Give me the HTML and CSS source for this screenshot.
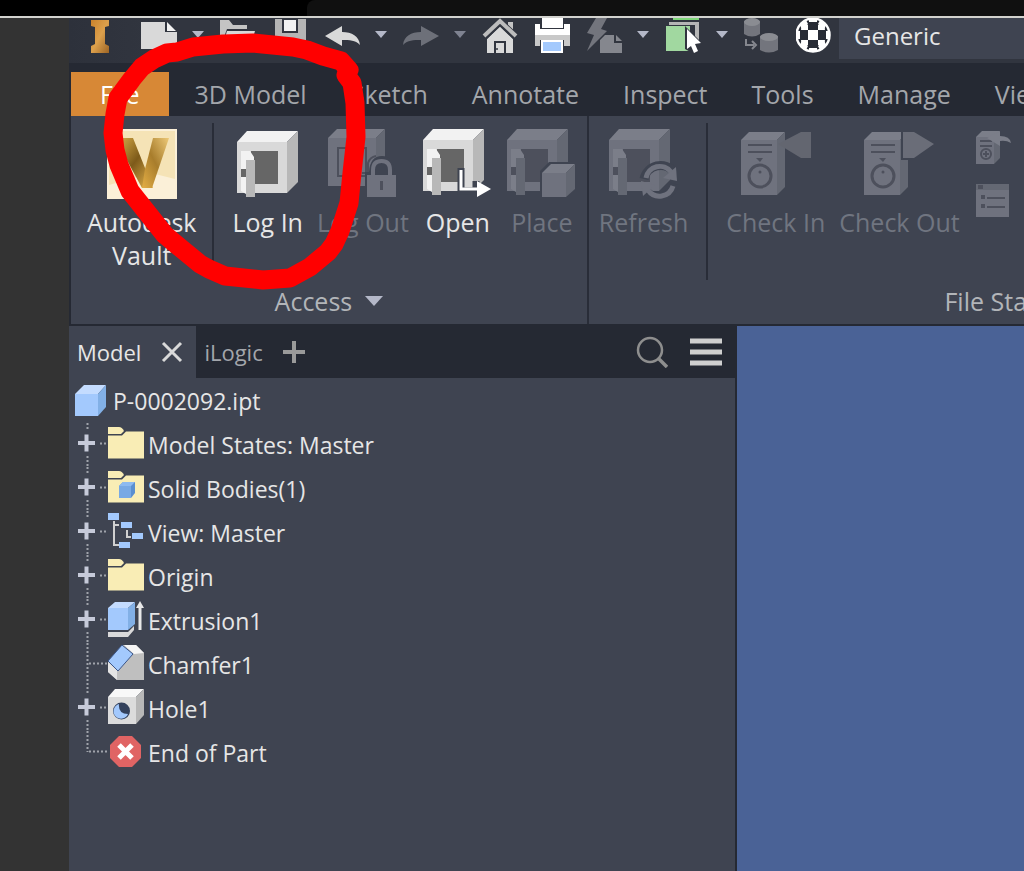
FILE: index.html
```html
<!doctype html>
<html lang="en">
  <head>
    <meta charset="utf-8">
    <title>P-0002092.ipt</title>
    <link rel="stylesheet" href="styles.css">
  </head>
  <body>
    <svg class="defs" aria-hidden="true">
      <defs>
        <linearGradient id="gold" x1="0" y1="0" x2="1" y2="1">
          <stop offset="0" stop-color="#e0b34c" />
          <stop offset="0.5" stop-color="#7d5a1a" />
          <stop offset="1" stop-color="#e8b64e" />
        </linearGradient>
        <linearGradient id="gold-light" x1="1" y1="0" x2="0" y2="1">
          <stop offset="0" stop-color="#edc978" />
          <stop offset="0.5" stop-color="#a87d2c" />
          <stop offset="1" stop-color="#e4ae45" />
        </linearGradient>
        <linearGradient id="bronze" x1="0" y1="0" x2="1" y2="1">
          <stop offset="0" stop-color="#c9822c" />
          <stop offset="0.5" stop-color="#dca04c" />
          <stop offset="1" stop-color="#9c6425" />
        </linearGradient>
      </defs>
      <symbol id="caret" viewBox="0 0 12 36">
        <polygon points="0,13 12,13 6,20" fill="#b4b8c8" />
      </symbol>
      <symbol id="safe" viewBox="0 0 70 70">
        <polygon class="top" points="0,11 10,0 61,0 50,11" />
        <polygon class="side" points="50,11 61,0 61,51 50,62" />
        <rect class="front" x="0" y="11" width="50" height="51" />
        <rect class="inside" x="14" y="20" width="27" height="33" />
        <polygon class="top" points="4,20 13,20 17,26 17,30 9,30 9,63 4,60" />
        <rect class="side" x="9" y="29" width="9" height="37" />
        <rect class="inside" x="4" y="38" width="5" height="8" />
      </symbol>
      <symbol id="vault-file" viewBox="0 0 70 70">
        <polygon class="top" points="0,11 8,3 44,3 36,11" />
        <polygon class="side" points="36,11 44,3 44,58 36,66" />
        <rect class="front" x="0" y="11" width="36" height="55" />
        <rect class="inside" x="7" y="15" width="24" height="2" />
        <rect class="inside" x="7" y="22" width="24" height="2" />
        <polygon class="inside" points="15,29 22,29 19,33" />
        <circle cx="19" cy="47" r="11" fill="none" stroke="#4d505c" stroke-width="3" />
        <circle class="inside" cx="19" cy="43" r="1.5" />
      </symbol>
      <symbol id="folder" viewBox="0 0 36 44">
        <path d="M0 4h11q3 0 5 4l-3 3H0z" fill="#f9edb5" />
        <path d="M0 12.500h14l4-4h18v27H0z" fill="#f9edb5" />
      </symbol>
      <symbol id="cube" viewBox="0 0 32 32">
        <polygon points="0,9 9,0 31,0 23,9" fill="#c4dcff" />
        <polygon points="23,9 31,0 31,22 23,31" fill="#82b0e6" />
        <rect y="9" width="23" height="22" fill="#a3c9fd" />
      </symbol>
      <symbol id="branch-plus" viewBox="0 0 39 44">
        <path class="dots" d="M18.500 0v8M18.500 33v11M31 20.500h7" />
        <path d="M9 20h17M17.500 11.500v17" stroke="#c6cad9" stroke-width="4" />
      </symbol>
      <symbol id="branch-mid" viewBox="0 0 39 44">
        <path class="dots" d="M18.500 0v44M20 20.500h18" />
      </symbol>
      <symbol id="branch-end" viewBox="0 0 39 44">
        <path class="dots" d="M18.500 0v21M20 20.500h18" />
      </symbol>
    </svg>

    <div class="bezel"><div class="bezel-tab"></div></div>

    <div class="app">
      <div class="gutter"></div>
      <div class="window">

        <header class="quick-access">
          <svg class="logo" viewBox="0 0 18 36">
            <path d="M0 2h18v6l-4 1v17l4 2v7H0v-7l4-2V9L0 8z" fill="url(#bronze)" />
          </svg>
          <div class="tools">
            <div class="split">
              <button class="tool" aria-label="New">
                <svg viewBox="0 0 36 36">
                  <polygon points="0,4 24,4 24,14 36,14 36,31 0,31" fill="#d9d9d9" />
                  <polygon points="26,4 35,13 26,13" fill="#f2f2f2" />
                </svg>
              </button>
              <button class="drop" aria-label="New options"><svg><use href="#caret" /></svg></button>
            </div>
            <button class="tool" aria-label="Open">
              <svg viewBox="0 0 36 36">
                <path d="M0 2h9l4 5h14v4H7L0 30z" fill="#c4c4c4" />
                <path d="M7 13h28l-6 20H1z" fill="#d9d9d9" />
              </svg>
            </button>
            <button class="tool" aria-label="Save">
              <svg viewBox="0 0 36 36">
                <path d="M3 1h31v33H7l-4-4z" fill="#b5b5b5" />
                <rect x="10" y="1" width="16" height="14" fill="#31353f" />
                <rect x="12" y="2" width="12" height="11" fill="#f2f2f2" />
              </svg>
            </button>
            <div class="split">
              <button class="tool" aria-label="Undo">
                <svg viewBox="0 0 36 36"><path d="M1 18L18 8v6c10 0 17 4 18 13-5-5-10-5-18-5v6z" fill="#d9d9d9" /></svg>
              </button>
              <button class="drop" aria-label="Undo history"><svg><use href="#caret" /></svg></button>
            </div>
            <div class="split">
              <button class="tool" aria-label="Redo">
                <svg viewBox="0 0 36 36"><path d="M36 18L18 8v6C8 14 1 18 0 27c5-5 10-5 18-5v6z" fill="#6d7079" /></svg>
              </button>
              <button class="drop faded" aria-label="Redo history"><svg><use href="#caret" /></svg></button>
            </div>
            <button class="tool" aria-label="Home">
              <svg viewBox="0 0 36 36">
                <rect x="26" y="4" width="5" height="9" fill="#c4c4c4" />
                <path d="M5 21L18 8l13 13v14H5z" fill="#d9d9d9" />
                <path d="M2 19L18 4l16 15" fill="none" stroke="#31353f" stroke-width="7" />
                <path d="M2 18L18 3l16 15" fill="none" stroke="#bcbcbc" stroke-width="4" />
                <path d="M13 35V24h10v11" fill="#d9d9d9" stroke="#31353f" stroke-width="2" />
                <circle cx="15" cy="31" r="1" fill="#31353f" />
              </svg>
            </button>
            <button class="tool" aria-label="Print">
              <svg viewBox="0 0 36 36">
                <path d="M1 6h5v5h24V6h6v12H1z" fill="#fff" />
                <path d="M1 17h35v11h-6v-6H6v6H1z" fill="#c8c8c8" />
                <rect x="8" y="0" width="21" height="10" fill="#fff" />
                <rect x="7" y="22" width="22" height="13" fill="#fff" />
                <rect x="9" y="24" width="18" height="9" fill="#a3c9fd" />
              </svg>
            </button>
            <div class="split">
              <button class="tool" aria-label="Update">
                <svg viewBox="0 0 36 36">
                  <polygon points="10,0 21,0 15,11 21,13 1,33 8,17 1,15" fill="#73757d" />
                  <polygon points="19,17 28,17 28,25 36,25 36,35 14,35 14,22" fill="#85878e" />
                  <polygon points="30,17 36,23 30,23" fill="#85878e" />
                </svg>
              </button>
              <button class="drop" aria-label="Update options"><svg><use href="#caret" /></svg></button>
            </div>
            <div class="split">
              <button class="tool" aria-label="Select">
                <svg viewBox="0 0 36 36">
                  <path d="M8 0h26v2H8z" fill="#7fd67a" />
                  <path d="M4 4h30v18h-4V7H4z" fill="#b5b5b5" />
                  <rect x="1" y="8" width="24" height="25" fill="#a1d8a0" />
                  <polygon points="20,8 37,25 31,26 34,35 29,36 20,31" fill="#31353f" />
                  <polygon points="22,11 36,25 30,26 33,33 29,35 26,28 22,31" fill="#fff" />
                </svg>
              </button>
              <button class="drop" aria-label="Selection filter"><svg><use href="#caret" /></svg></button>
            </div>
            <button class="tool" aria-label="Update from vault">
              <svg viewBox="0 0 36 36">
                <path d="M0 3v13q8 5 16 0V3z" fill="#73757d" />
                <ellipse cx="8" cy="4" rx="8" ry="4" fill="#8a8c92" />
                <path d="M16 18v14q9 5 18 0V18z" fill="#73757d" />
                <ellipse cx="25" cy="19" rx="9" ry="4" fill="#8a8c92" />
                <path d="M2 21v6h8M8 23l4 4-4 4" fill="none" stroke="#85878e" stroke-width="2" />
              </svg>
            </button>
            <button class="tool" aria-label="Appearance">
              <svg viewBox="0 0 36 36">
                <circle cx="17" cy="17" r="16.500" fill="#272b35" stroke="#fff" stroke-width="2.500" />
                <path d="M12 12h10v10H12zM4 7l6-5 2 4-6 6zM30 7l-6-5-2 4 6 6zM4 27l6 5 2-4-6-6zM30 27l-6 5-2-4 6-6z" fill="#fff" />
                <path d="M6 7h6v5H5zM22 7h6l1 5h-7zM5 22h7v5H6zM22 22h7l-1 5h-6zM13 0h8v4h-8zM13 30h8v4h-8zM0 13h4v8H0zM30 13h4v8h-4z" fill="#fff" />
              </svg>
            </button>
          </div>
          <select class="material" aria-label="Material"><option>Generic</option></select>
        </header>

        <nav class="tabs">
          <a class="tab file" href="#file">File</a>
          <a class="tab" href="#model">3D Model</a>
          <a class="tab" href="#sketch">Sketch</a>
          <a class="tab" href="#annotate">Annotate</a>
          <a class="tab" href="#inspect">Inspect</a>
          <a class="tab" href="#tools">Tools</a>
          <a class="tab" href="#manage">Manage</a>
          <a class="tab" href="#view">View</a>
        </nav>

        <div class="ribbon">
          <section class="panel">
            <div class="commands">
              <div class="group vault">
                <button class="command">
                  <svg viewBox="0 0 70 70">
                    <rect width="70" height="70" fill="#fbf0d8" />
                    <polygon points="2,2 68,2 68,50 44,44 2,56" fill="#f5e3b6" />
                    <polygon points="8,9 26,9 46,59 35,59" fill="url(#gold)" />
                    <polygon points="46,9 62,9 45,59 35,59 38,40" fill="url(#gold-light)" />
                  </svg>
                  <span>Autodesk<br>Vault</span>
                </button>
              </div>
              <div class="group access">
                <button class="command">
                  <svg viewBox="-4 -2 70 70"><use href="#safe" width="70" height="70" /></svg>
                  <span>Log In</span>
                </button>
                <button class="command" disabled>
                  <svg viewBox="0 0 70 70">
                    <polygon class="top" points="0,9 9,0 57,0 48,9" />
                    <polygon class="side" points="48,9 57,0 57,48 48,57" />
                    <rect class="front" y="9" width="48" height="48" />
                    <path d="M10 19h28v28H10zM34 44h6V34q2-6 8-7" fill="none" stroke="#4d505c" stroke-width="2" />
                    <path d="M37 70V43h4q1-16 13-16t13 16h3v27z" fill="#3f4451" />
                    <path d="M45 47v-6q0-9 8.500-9t8.500 9v6" fill="none" stroke="#6f727e" stroke-width="4" />
                    <rect class="front" x="39" y="46" width="29" height="22" />
                    <rect class="inside" x="52" y="52" width="3" height="9" />
                  </svg>
                  <span>Log Out</span>
                </button>
                <button class="command">
                  <svg viewBox="0 0 70 70">
                    <use href="#safe" width="70" height="70" />
                    <path d="M38 39v23h18M53 52v14" fill="none" stroke="#3f4451" stroke-width="7" />
                    <path d="M38 41v19h18" fill="none" stroke="#fff" stroke-width="3" />
                    <polygon points="54,52 68,60 54,68" fill="#fff" />
                  </svg>
                  <span>Open</span>
                </button>
                <button class="command" disabled>
                  <svg viewBox="0 0 70 70">
                    <use href="#safe" width="70" height="70" />
                    <path d="M33 70V42l9-9h28v37z" fill="#3f4451" />
                    <polygon class="top" points="35,44 44,35 68,35 59,44" />
                    <polygon class="side" points="59,44 68,35 68,60 59,68" />
                    <rect class="front" x="35" y="44" width="24" height="24" />
                  </svg>
                  <span>Place</span>
                </button>
              </div>
            </div>
            <button class="title">Access <svg viewBox="0 0 18 10"><polygon points="0,0 18,0 9,10" fill="#b4b8c8" /></svg></button>
          </section>

          <section class="panel status">
            <div class="commands">
              <div class="group refresh">
                <button class="command" disabled>
                  <svg viewBox="0 0 70 70">
                    <use href="#safe" width="70" height="70" />
                    <path d="M35 50a17 17 0 0 1 30-7M66 55a17 17 0 0 1-30 6" fill="none" stroke="#3f4451" stroke-width="9" />
                    <path d="M37 49a14 14 0 0 1 25-6M64 57a14 14 0 0 1-25 4" fill="none" stroke="#6f727e" stroke-width="5" />
                    <polygon class="front" points="54,49 68,52 67,38" />
                    <polygon class="front" points="32,52 46,56 34,67" />
                  </svg>
                  <span>Refresh</span>
                </button>
              </div>
              <div class="group">
                <button class="command" disabled>
                  <svg viewBox="0 0 70 70">
                    <use href="#vault-file" width="70" height="70" />
                    <polygon points="37,15 60,3 70,3 70,29 60,29" fill="#636670" />
                  </svg>
                  <span>Check In</span>
                </button>
                <button class="command" disabled>
                  <svg viewBox="0 0 70 70">
                    <use href="#vault-file" width="70" height="70" />
                    <path d="M37 2h12v29H37z" fill="#3f4451" />
                    <polygon points="39,3 50,3 70,15 50,29 39,29" fill="#6a6d78" />
                  </svg>
                  <span>Check Out</span>
                </button>
                <div class="stack">
                  <button class="small" disabled aria-label="Undo Check Out">
                    <svg viewBox="0 0 36 34">
                      <polygon class="top" points="0,6 6,0 24,0 18,6" />
                      <polygon class="side" points="18,6 24,0 24,27 18,33" />
                      <rect class="front" y="6" width="18" height="27" />
                      <path d="M4 10h12M4 15h12" stroke="#4d505c" stroke-width="2" />
                      <circle cx="10" cy="23" r="5" fill="none" stroke="#4d505c" stroke-width="2" />
                      <path d="M10 20v6M7 23h6" stroke="#4d505c" stroke-width="2" />
                      <path d="M11 7L24 0v5q10 0 11 7-5-3-11-2v5z" fill="#7b7e89" />
                    </svg>
                  </button>
                  <button class="small" disabled aria-label="Vault Options">
                    <svg viewBox="0 0 36 34">
                      <rect class="front" width="33" height="33" />
                      <rect class="side" width="33" height="6" />
                      <path d="M2 3h5M5 13h4M5 22h4" stroke="#4d505c" stroke-width="4" />
                      <path d="M11 14h18M11 23h18" stroke="#4d505c" stroke-width="2" />
                    </svg>
                  </button>
                </div>
              </div>
            </div>
            <div class="title">File Status</div>
          </section>
        </div>

        <main class="workspace">
          <aside class="browser">
            <div class="browser-bar">
              <div class="browser-tab active">
                <a href="#model-tree">Model</a>
                <button aria-label="Close">
                  <svg viewBox="0 0 22 22"><path d="M2 2l18 18M20 2L2 20" stroke="#d9d9d9" stroke-width="3" /></svg>
                </button>
              </div>
              <div class="browser-tab">
                <a href="#ilogic">iLogic</a>
                <button aria-label="Add tab">
                  <svg viewBox="0 0 22 22"><path d="M0 11h22M11 0v22" stroke="#9a9a9a" stroke-width="4" /></svg>
                </button>
              </div>
              <div class="browser-actions">
                <button aria-label="Search">
                  <svg viewBox="0 0 32 32"><path d="M22 22l9 9" stroke="#8e8e8e" stroke-width="3.500" /><circle cx="14" cy="14" r="12" fill="none" stroke="#8e8e8e" stroke-width="2.500" /></svg>
                </button>
                <button aria-label="Menu">
                  <svg viewBox="0 0 32 32"><path d="M0 5h32M0 16h32M0 27h32" stroke="#cfcfcf" stroke-width="5" /></svg>
                </button>
              </div>
            </div>

            <ul class="tree" id="model-tree">
              <li class="root"><svg class="part"><use href="#cube" /></svg>P-0002092.ipt</li>
              <li>
                <button class="toggle" aria-label="Expand Model States"><svg><use href="#branch-plus" /></svg></button>
                <svg class="icon"><use href="#folder" /></svg>Model States: Master
              </li>
              <li>
                <button class="toggle" aria-label="Expand Solid Bodies"><svg><use href="#branch-plus" /></svg></button>
                <svg class="icon" viewBox="0 0 36 44">
                  <use href="#folder" width="36" height="44" />
                  <polygon points="11,19 15,15 27,15 27,26 23,31 11,31" fill="#5a8fd0" />
                  <polygon points="11,19 15,15 27,15 23,19" fill="#8dbaf0" />
                  <rect x="11" y="19" width="12" height="12" fill="#78a9e4" />
                </svg>Solid Bodies(1)
              </li>
              <li>
                <button class="toggle" aria-label="Expand View"><svg><use href="#branch-plus" /></svg></button>
                <svg class="icon" viewBox="0 0 36 44">
                  <path d="M11 14H6v20h5M6 10v5M19 19v7h4" fill="none" stroke="#d0d0d0" stroke-width="2" />
                  <path d="M0 2h11v7H0zM13 11h11v6H13zM24 22h11v6H24zM11 31h11v6H11z" fill="#a3c9fd" />
                </svg>View: Master
              </li>
              <li>
                <button class="toggle" aria-label="Expand Origin"><svg><use href="#branch-plus" /></svg></button>
                <svg class="icon"><use href="#folder" /></svg>Origin
              </li>
              <li>
                <button class="toggle" aria-label="Expand Extrusion1"><svg><use href="#branch-plus" /></svg></button>
                <svg class="icon" viewBox="0 0 36 44">
                  <polygon points="0,9 7,3 27,3 20,9" fill="#c4dcff" />
                  <polygon points="20,9 27,3 27,25 20,31" fill="#82b0e6" />
                  <rect y="9" width="20" height="22" fill="#a3c9fd" />
                  <polygon points="0,33 20,33 26,27 26,31 20,38 0,38" fill="#d9d9d9" />
                  <path d="M32 6v25" stroke="#e8e8e8" stroke-width="3" />
                  <polygon points="28,9 32,2 36,9" fill="#e8e8e8" />
                </svg>Extrusion1
              </li>
              <li>
                <span class="toggle"><svg><use href="#branch-mid" /></svg></span>
                <svg class="icon" viewBox="0 0 36 44">
                  <polygon points="0,19 15,2 28,2 36,10 36,37 9,37 0,29" fill="#bfbfbf" />
                  <polygon points="16,2 28,2 36,10 26,11" fill="#f5f5f5" />
                  <polygon points="0,19 9,27 9,37 0,29" fill="#e4e4e4" />
                  <polygon points="0,18 14,2 25,11 10,28" fill="#a3c9fd" stroke="#3c5688" />
                </svg>Chamfer1
              </li>
              <li>
                <button class="toggle" aria-label="Expand Hole1"><svg><use href="#branch-plus" /></svg></button>
                <svg class="icon" viewBox="0 0 36 44">
                  <polygon points="0,10 7,2 36,2 28,10" fill="#f8f8f8" />
                  <polygon points="28,10 36,2 36,28 28,37" fill="#b8b8b8" />
                  <rect y="10" width="28" height="27" fill="#dcdcdc" />
                  <circle cx="13.500" cy="24" r="8.500" fill="#33415c" />
                  <path d="M11 17a7.500 7.500 0 1 0 9 10q-10 0-9-10z" fill="#a3c9fd" />
                </svg>Hole1
              </li>
              <li>
                <span class="toggle"><svg><use href="#branch-end" /></svg></span>
                <svg class="icon" viewBox="0 0 36 44">
                  <polygon points="11,5 24,5 33,14 33,27 24,36 11,36 2,27 2,14" fill="#e06464" />
                  <path d="M11 14l13 13M24 14L11 27" stroke="#fff" stroke-width="5" />
                </svg>End of Part
              </li>
            </ul>
          </aside>
          <div class="canvas"></div>
        </main>
      </div>
    </div>

    <!-- hand-drawn marker round the Log In command -->
    <svg class="marker" width="400" height="310" viewBox="0 0 400 310">
      <polyline points="346,75 349,70 341,61 323,56 307,50 293,47 253,43 223,44 193,47 177,52 167,53 154,59 142,67 132,79 118,98 115,114 113,133 115,150 119,165 130,191 153,220 165,235 183,250 200,264 209,269 225,276 263,280 290,278 310,267 328,252 334,244 340,231 349,203 352,173 356,137 355,103 352,83 346,75" />
    </svg>
  </body>
</html>
```
FILE: styles.css
```css
* {
  box-sizing: border-box;
}

body {
  margin: 0;
  min-height: 100vh;
  display: flex;
  flex-direction: column;
  overflow: hidden;
  background: #333333;
  font-family: "Open Sans", "Noto Sans", sans-serif;
  font-size: 25px;
  color: #e6e6e6;
}

button {
  border: 0;
  padding: 0;
  background: none;
  color: inherit;
  font: inherit;
}

a {
  color: inherit;
  text-decoration: none;
}

svg {
  display: block;
}

.defs {
  position: absolute;
  width: 0;
  height: 0;
}

.bezel {
  height: 18px;
  padding-left: 30%;
  background: #000;
  border-bottom: 2px solid #d2d2ce;
}

.bezel-tab {
  height: 16px;
  background: #101010;
  border-top-left-radius: 8px;
}

.app {
  flex: 1;
  display: flex;
}

.gutter {
  flex: 0 0 69px;
}

.window {
  flex: 1;
  min-width: 0;
  display: flex;
  flex-direction: column;
  background: #252933;
}

/* quick access toolbar */

.quick-access {
  height: 45px;
  display: flex;
  align-items: flex-start;
  padding-left: 22px;
  background: linear-gradient(90deg, #2d313b, #31353f 80px);
}

.logo {
  width: 18px;
  height: 36px;
  margin-right: 32px;
}

.tools {
  display: flex;
  gap: 16px;
}

.split {
  display: flex;
  gap: 15px;
}

.tool svg {
  width: 36px;
  height: 36px;
}

.drop svg {
  width: 12px;
  height: 36px;
}

.faded {
  opacity: 0.6;
}

.material {
  flex: 1;
  min-width: 0;
  height: 41px;
  margin-left: 7px;
  padding: 0 0 7px 15px;
  border: 0;
  border-radius: 0;
  appearance: none;
  background: #3f4451;
  color: #e6e6e6;
  font: inherit;
  font-size: 24px;
}

/* ribbon */

.tabs {
  height: 53px;
  display: flex;
  align-items: flex-end;
  padding-left: 2px;
  overflow: hidden;
  white-space: nowrap;
  color: #a3a6ab;
}

.tab {
  padding: 0 22px;
  line-height: 44px;
}

.file {
  margin-right: 4px;
  padding: 0 29px;
  background: #d78836;
  color: #fff;
}

.ribbon {
  display: flex;
  height: 210px;
  overflow: hidden;
  border-left: 2px solid #252933;
  border-bottom: 2px solid #252933;
  background: #3f4451;
}

.panel {
  flex: none;
  display: flex;
  flex-direction: column;
  border-right: 2px solid #292d38;
}

.status {
  width: 832px;
}

.commands {
  flex: 1;
  display: flex;
}

.group {
  display: flex;
  align-items: flex-start;
  margin-top: 7px;
  padding: 6px 11px 0;
}

.group + .group {
  border-left: 2px solid #292d38;
}

.vault {
  padding: 6px 9px 0;
}

.access {
  padding-right: 3px;
}

.refresh {
  padding-left: 3px;
}

.command {
  padding: 0 7px;
  line-height: 33px;
  --top: #f2f2f2;
  --front: #d9d9d9;
  --side: #b8b8b8;
  --inside: #666666;
}

.command svg {
  width: 70px;
  height: 70px;
  margin: 0 auto 7px;
}

.command:disabled, .small:disabled {
  color: #707580;
  --top: #7b7e89;
  --front: #6f727e;
  --side: #646873;
  --inside: #4d505c;
}

.top {
  fill: var(--top);
}

.front {
  fill: var(--front);
}

.side {
  fill: var(--side);
}

.inside {
  fill: var(--inside);
}

.stack {
  display: grid;
  gap: 19px;
  padding: 2px 9px;
}

.small svg {
  width: 36px;
  height: 34px;
}

.title {
  display: flex;
  justify-content: center;
  align-items: center;
  gap: 13px;
  height: 44px;
  padding-bottom: 2px;
  color: #b2b5b9;
}

.title svg {
  width: 18px;
  height: 10px;
}

/* model browser */

.workspace {
  flex: 1;
  display: flex;
}

.browser {
  flex: 0 0 668px;
  border-right: 2px solid #252933;
  background: #3f4451;
  font-size: 23px;
}

.browser-bar {
  display: flex;
  height: 52px;
  background: #252933;
  font-size: 22px;
}

.browser-tab {
  display: flex;
  align-items: center;
  gap: 20px;
  padding: 0 8px;
  color: #a3a6ab;
}

.browser-tab svg {
  width: 22px;
  height: 22px;
}

.active {
  padding-right: 13px;
  background: #3f4451;
  color: #e6e6e6;
}

.browser-actions {
  display: flex;
  align-items: center;
  gap: 22px;
  margin-left: auto;
  padding-right: 13px;
}

.browser-actions svg {
  width: 32px;
  height: 32px;
}

.tree {
  margin: 0;
  padding: 1px 0 0;
  list-style: none;
}

.tree li {
  display: flex;
  align-items: center;
  height: 44px;
}

.root {
  padding-left: 6px;
}

.part {
  width: 32px;
  height: 32px;
  margin-right: 6px;
}

.toggle svg {
  width: 39px;
  height: 44px;
}

.icon {
  width: 36px;
  height: 44px;
  margin-right: 4px;
}

.dots {
  fill: none;
  stroke: #a0a3ab;
  stroke-width: 2px;
  stroke-dasharray: 2 2;
}

.canvas {
  flex: 1;
  background: #4a6296;
}

.marker {
  position: absolute;
  top: 0;
  left: 0;
  pointer-events: none;
  fill: none;
  stroke: #ff0000;
  stroke-width: 19px;
  stroke-linecap: round;
  stroke-linejoin: round;
}
```
